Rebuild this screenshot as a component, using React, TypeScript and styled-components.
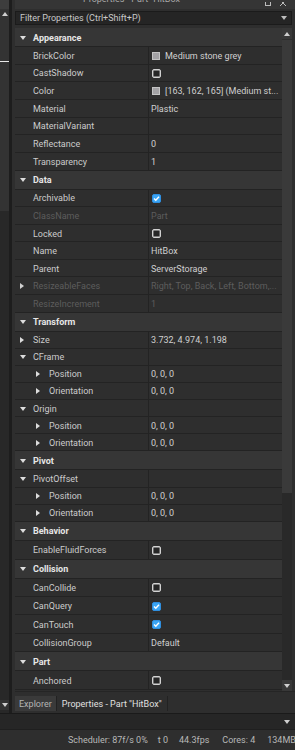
import React from 'react';
import styled, { createGlobalStyle } from 'styled-components';

const GlobalStyle = createGlobalStyle`
  html, body { margin: 0; padding: 0; background: #2e2e2e; }
  body { font-family: Roboto, "Noto Sans", sans-serif; font-size: 9px; color: #cccccc; }
  * { box-sizing: border-box; }
`;

const Shell = styled.div`
  width: 295px;
  height: 750px;
  display: flex;
  flex-direction: column;
  overflow: hidden;
  background: #2e2e2e;
`;

const Workspace = styled.div`
  flex: 1;
  display: flex;
  min-height: 0;
`;

const ExplorerEdge = styled.div`
  width: 9px;
  display: flex;
  flex-direction: column;
  background: #262626;
`;

const EdgeCap = styled.div`
  height: 9px;
  background: #3d3d3d;
`;

const EdgeButton = styled.div`
  height: 10px;
  display: flex;
  align-items: center;
  justify-content: center;
  background: #333333;
`;

const EdgeThumb = styled.div`
  height: 192px;
  background: #333333;
  padding-top: 42px;
`;

const EdgeLine = styled.div`
  height: 1px;
  background: #e8e8e8;
`;

const EdgeTrack = styled.div<{ $h?: number }>`
  flex: ${(p) => (p.$h ? 'none' : '1')};
  height: ${(p) => (p.$h ? `${p.$h}px` : 'auto')};
  background: #282828;
`;

const Splitter = styled.div`
  width: 3px;
  background: #1d1d1d;
`;

const Panel = styled.div`
  flex: 1;
  display: flex;
  flex-direction: column;
  padding-left: 3px;
  min-width: 0;
`;

const TitleBar = styled.div`
  height: 9px;
  display: flex;
  align-items: flex-end;
  overflow: hidden;
  background: #353535;
`;

const TitleText = styled.div`
  flex: 1;
  padding-left: 68px;
  color: #a8a8a8;
  font-size: 9px;
  line-height: 9px;
  margin-bottom: 5px;
  white-space: nowrap;
`;

const TitleIcons = styled.div`
  display: flex;
  gap: 9px;
  padding-right: 9px;
  margin-bottom: 3px;
`;

const FilterRow = styled.div`
  height: 19px;
  padding: 2px 3px 3px 0;
  display: flex;
`;

const FilterBox = styled.div`
  flex: 1;
  display: flex;
  align-items: center;
  background: #252525;
  border: 1px solid #1b1b1b;
  padding: 0 4px 0 4px;
  color: #c8c8c8;
`;

const FilterPlaceholder = styled.span`
  flex: 1;
`;

const GridArea = styled.div`
  flex: 1;
  display: flex;
  min-height: 0;
`;

const Grid = styled.div`
  flex: 1;
  display: flex;
  flex-direction: column;
  overflow: hidden;
  min-width: 0;
`;

const Row = styled.div<{ $header?: boolean; $h: number }>`
  height: ${(p) => p.$h}px;
  flex: none;
  display: flex;
  padding-top: 1px;
  border-bottom: 1px solid #232323;
  background: ${(p) => (p.$header ? '#363636' : '#2e2e2e')};
`;

const NameCell = styled.div<{ $level: number; $header?: boolean; $disabled?: boolean }>`
  width: ${(p) => (p.$header ? 'auto' : '134px')};
  flex: ${(p) => (p.$header ? '1' : 'none')};
  display: flex;
  align-items: center;
  margin-top: -1px;
  padding-top: 1px;
  padding-left: ${(p) => 5 + p.$level * 16}px;
  border-right: ${(p) => (p.$header ? 'none' : '1px solid #232323')};
  font-weight: ${(p) => (p.$header ? 700 : 400)};
  color: ${(p) => (p.$header ? '#e6e6e6' : p.$disabled ? '#5d5d5d' : '#cccccc')};
  white-space: nowrap;
`;

const ArrowSlot = styled.span`
  width: 13px;
  flex: none;
  display: flex;
  align-items: center;
`;

const ValueCell = styled.div<{ $disabled?: boolean }>`
  flex: 1;
  display: flex;
  align-items: center;
  gap: 5px;
  padding-left: 2px;
  min-width: 0;
  white-space: nowrap;
  overflow: hidden;
  color: ${(p) => (p.$disabled ? '#5d5d5d' : '#d0d0d0')};
`;

const Check = styled.span<{ $on?: boolean }>`
  width: 9px;
  height: 9px;
  margin-left: 1px;
  border-radius: 2px;
  border: 1px solid ${(p) => (p.$on ? '#2f8fe0' : '#d2d2d2')};
  background: ${(p) => (p.$on ? '#3aa5f5' : '#262626')};
  box-shadow: ${(p) => (p.$on ? 'none' : 'inset 0 0 0 0.4px #d2d2d2')};
  display: flex;
  align-items: center;
  justify-content: center;
`;

const Swatch = styled.span<{ $color: string }>`
  width: 8px;
  height: 8px;
  margin-left: 1px;
  background: ${(p) => p.$color};
  border: 1px solid #c4c4c4;
`;

const Scrollbar = styled.div`
  width: 13px;
  display: flex;
  flex-direction: column;
  padding-right: 3px;
  background: #2e2e2e;
`;

const ScrollButton = styled.div`
  height: 11px;
  display: flex;
  align-items: center;
  justify-content: center;
  background: #383838;
`;

const ScrollThumb = styled.div`
  height: 454px;
  background: #3a3a3a;
  border-top: 1px solid #2e2e2e;
`;

const ScrollTrack = styled.div`
  flex: 1;
  background: #292929;
`;

const TabBar = styled.div`
  height: 22px;
  display: flex;
  align-items: flex-start;
  padding-top: 4px;
  border-top: 1px solid #252525;
`;

const Tab = styled.div<{ $active?: boolean }>`
  height: 15px;
  display: flex;
  align-items: center;
  padding: 0 ${(p) => (p.$active ? '5px' : '4px')};
  background: ${(p) => (p.$active ? '#2e2e2e' : '#3a3a3a')};
  color: ${(p) => (p.$active ? '#e0e0e0' : '#b4b4b4')};
  border-right: 1px solid #222222;
  white-space: nowrap;
`;

const CommandBar = styled.div`
  height: 17px;
  display: flex;
  align-items: center;
  justify-content: flex-end;
  padding-right: 5px;
  background: #262626;
  border-top: 1px solid #1a1a1a;
  border-bottom: 1px solid #1f1f1f;
`;

const StatusBar = styled.div`
  height: 20px;
  display: flex;
  align-items: center;
  padding-left: 68px;
  color: #b8b8b8;
  white-space: nowrap;
  background: #2e2e2e;
`;

const StatusItem = styled.span<{ $gap: number }>`
  margin-right: ${(p) => p.$gap}px;
`;

const Down = ({ color = '#dddddd' }: { color?: string }) => (
  <svg width="6" height="4" viewBox="0 0 6 4">
    <polygon points="0,0 6,0 3,4" fill={color} />
  </svg>
);

const Right = ({ color = '#dddddd' }: { color?: string }) => (
  <svg width="4" height="6" viewBox="0 0 4 6">
    <polygon points="0,0 4,3 0,6" fill={color} />
  </svg>
);

const Up = ({ color = '#cfcfcf' }: { color?: string }) => (
  <svg width="6" height="4" viewBox="0 0 6 4">
    <polygon points="0,4 6,4 3,0" fill={color} />
  </svg>
);

const CheckMark = () => (
  <svg width="7" height="7" viewBox="0 0 7 7">
    <polyline points="1,3.6 2.8,5.3 6,1.8" fill="none" stroke="#ffffff" strokeWidth="1.4" />
  </svg>
);

type Value =
  | { kind: 'text'; text: string }
  | { kind: 'check'; on: boolean }
  | { kind: 'color'; color: string; text: string }
  | { kind: 'none' };

type Prop = {
  name: string;
  level?: number;
  arrow?: 'down' | 'right';
  disabled?: boolean;
  value: Value;
};

type Section = { title: string; rowHeight: number; rows: Prop[] };

const HEADER_H = 19;

const t = (text: string): Value => ({ kind: 'text', text });
const c = (on: boolean): Value => ({ kind: 'check', on });
const none: Value = { kind: 'none' };

const sections: Section[] = [
  {
    title: 'Appearance',
    rowHeight: 17.67,
    rows: [
      { name: 'BrickColor', value: { kind: 'color', color: '#a3a2a5', text: 'Medium stone grey' } },
      { name: 'CastShadow', value: c(false) },
      { name: 'Color', value: { kind: 'color', color: '#a3a2a5', text: '[163, 162, 165] (Medium st...' } },
      { name: 'Material', value: t('Plastic') },
      { name: 'MaterialVariant', value: none },
      { name: 'Reflectance', value: t('0') },
      { name: 'Transparency', value: t('1') },
    ],
  },
  {
    title: 'Data',
    rowHeight: 17.57,
    rows: [
      { name: 'Archivable', value: c(true) },
      { name: 'ClassName', disabled: true, value: t('Part') },
      { name: 'Locked', value: c(false) },
      { name: 'Name', value: t('HitBox') },
      { name: 'Parent', value: t('ServerStorage') },
      { name: 'ResizeableFaces', arrow: 'right', disabled: true, value: t('Right, Top, Back, Left, Bottom,...') },
      { name: 'ResizeIncrement', disabled: true, value: t('1') },
    ],
  },
  {
    title: 'Transform',
    rowHeight: 17.14,
    rows: [
      { name: 'Size', arrow: 'right', value: t('3.732, 4.974, 1.198') },
      { name: 'CFrame', arrow: 'down', value: none },
      { name: 'Position', level: 1, arrow: 'right', value: t('0, 0, 0') },
      { name: 'Orientation', level: 1, arrow: 'right', value: t('0, 0, 0') },
      { name: 'Origin', arrow: 'down', value: none },
      { name: 'Position', level: 1, arrow: 'right', value: t('0, 0, 0') },
      { name: 'Orientation', level: 1, arrow: 'right', value: t('0, 0, 0') },
    ],
  },
  {
    title: 'Pivot',
    rowHeight: 17.1,
    rows: [
      { name: 'PivotOffset', arrow: 'down', value: none },
      { name: 'Position', level: 1, arrow: 'right', value: t('0, 0, 0') },
      { name: 'Orientation', level: 1, arrow: 'right', value: t('0, 0, 0') },
    ],
  },
  {
    title: 'Behavior',
    rowHeight: 19,
    rows: [{ name: 'EnableFluidForces', value: c(false) }],
  },
  {
    title: 'Collision',
    rowHeight: 18.4,
    rows: [
      { name: 'CanCollide', value: c(false) },
      { name: 'CanQuery', value: c(true) },
      { name: 'CanTouch', value: c(true) },
      { name: 'CollisionGroup', value: t('Default') },
    ],
  },
  {
    title: 'Part',
    rowHeight: 18.7,
    rows: [{ name: 'Anchored', value: c(false) }],
  },
];

const ValueView = ({ value, disabled }: { value: Value; disabled?: boolean }) => {
  switch (value.kind) {
    case 'text':
      return <ValueCell $disabled={disabled}>{value.text}</ValueCell>;
    case 'check':
      return (
        <ValueCell>
          <Check $on={value.on}>{value.on && <CheckMark />}</Check>
        </ValueCell>
      );
    case 'color':
      return (
        <ValueCell>
          <Swatch $color={value.color} />
          {value.text}
        </ValueCell>
      );
    default:
      return <ValueCell />;
  }
};

const PropRow = ({ prop, height }: { prop: Prop; height: number }) => {
  const level = prop.level ?? 0;
  const arrowColor = prop.disabled ? '#d0d0d0' : '#dddddd';
  return (
    <Row $h={height}>
      <NameCell $level={level} $disabled={prop.disabled}>
        <ArrowSlot>
          {prop.arrow === 'down' && <Down color={arrowColor} />}
          {prop.arrow === 'right' && <Right color={arrowColor} />}
        </ArrowSlot>
        {prop.name}
      </NameCell>
      <ValueView value={prop.value} disabled={prop.disabled} />
    </Row>
  );
};

export default function App() {
  return (
    <>
      <GlobalStyle />
      <Shell>
        <Workspace>
          <ExplorerEdge>
            <EdgeCap />
            <EdgeButton>
              <Up />
            </EdgeButton>
            <EdgeThumb>
              <EdgeLine />
            </EdgeThumb>
            <EdgeTrack />
            <EdgeButton>
              <Down color="#cfcfcf" />
            </EdgeButton>
            <EdgeTrack $h={3} />
          </ExplorerEdge>
          <Splitter />
          <Panel>
            <TitleBar>
              <TitleText>Properties - Part "HitBox"</TitleText>
              <TitleIcons>
                <svg width="6" height="4" viewBox="0 0 6 4">
                  <rect x="0.5" y="-2" width="5" height="5.5" fill="none" stroke="#bbbbbb" />
                </svg>
                <svg width="6" height="4" viewBox="0 0 6 4">
                  <path d="M0,-2 L6,4 M6,-2 L0,4" stroke="#bbbbbb" strokeWidth="1" />
                </svg>
              </TitleIcons>
            </TitleBar>
            <FilterRow>
              <FilterBox>
                <FilterPlaceholder>Filter Properties (Ctrl+Shift+P)</FilterPlaceholder>
                <Down color="#bdbdbd" />
              </FilterBox>
            </FilterRow>
            <GridArea>
              <Grid>
                {sections.map((s) => (
                  <React.Fragment key={s.title}>
                    <Row $header $h={HEADER_H}>
                      <NameCell $level={0} $header>
                        <ArrowSlot>
                          <Down />
                        </ArrowSlot>
                        {s.title}
                      </NameCell>
                    </Row>
                    {s.rows.map((r, i) => (
                      <PropRow key={s.title + i} prop={r} height={s.rowHeight} />
                    ))}
                  </React.Fragment>
                ))}
              </Grid>
              <Scrollbar>
                <ScrollButton>
                  <Up />
                </ScrollButton>
                <ScrollThumb />
                <ScrollTrack />
                <ScrollButton>
                  <Down color="#cfcfcf" />
                </ScrollButton>
              </Scrollbar>
            </GridArea>
            <TabBar>
              <Tab>Explorer</Tab>
              <Tab $active>Properties - Part "HitBox"</Tab>
            </TabBar>
          </Panel>
        </Workspace>
        <CommandBar>
          <Down color="#cfcfcf" />
        </CommandBar>
        <StatusBar>
          <StatusItem $gap={10}>Scheduler: 87f/s 0%</StatusItem>
          <StatusItem $gap={11}>t 0</StatusItem>
          <StatusItem $gap={13}>44.3fps</StatusItem>
          <StatusItem $gap={12}>Cores: 4</StatusItem>
          <StatusItem $gap={0}>134MB</StatusItem>
        </StatusBar>
      </Shell>
    </>
  );
}
